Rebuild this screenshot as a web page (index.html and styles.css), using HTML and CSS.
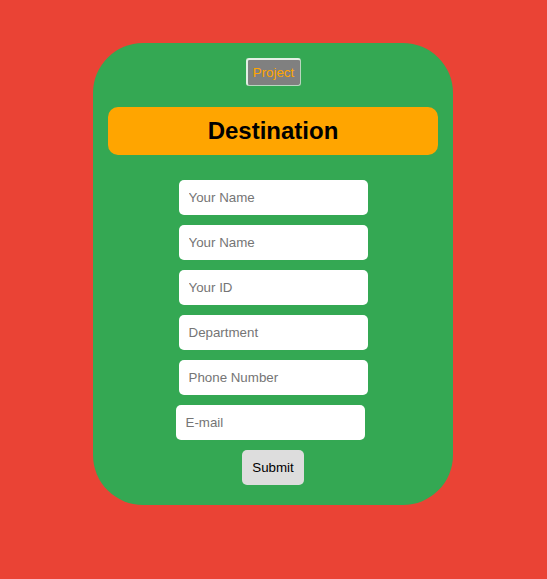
FILE: index.html
```html
<!DOCTYPE html>
<html>
<head>
<meta charset="utf-8">
<link rel="stylesheet" href="styles.css">
</head>
<body>
<div class="card">
  <button class="project">Project</button>
  <h1 class="title">Destination</h1>
  <form class="form">
    <input class="field" type="text" placeholder="Your Name">
    <input class="field" type="text" placeholder="Your Name">
    <input class="field" type="text" placeholder="Your ID">
    <input class="field" type="text" placeholder="Department">
    <input class="field" type="text" placeholder="Phone Number">
    <input class="field field-shift" type="email" placeholder="E-mail">
    <button class="submit" type="button">Submit</button>
  </form>
</div>
</body>
</html>
```
FILE: styles.css
```css
html, body {
  margin: 0;
  padding: 0;
  background: #EA4335;
  font-family: "Liberation Sans", Arial, sans-serif;
}
body {
  padding-right: 1px;
}
.card {
  box-sizing: border-box;
  width: 360px;
  height: 462px;
  margin: 43px auto 0;
  background: #34A853;
  border-radius: 50px;
  padding: 15px 15px 20px;
  display: flex;
  flex-direction: column;
  align-items: center;
}
.project {
  box-sizing: border-box;
  width: 55px;
  height: 28px;
  padding: 0;
  background: #808080;
  color: #FFA500;
  font-family: "Liberation Sans", Arial, sans-serif;
  font-size: 13.33px;
  border: 1px solid #b9d6bf;
  border-left: 2px solid #e2efe4;
  border-top: 2px solid #e2efe4;
  border-radius: 3px;
}
.title {
  box-sizing: border-box;
  width: 330px;
  height: 48px;
  margin: 21px 0 0;
  background: #FFA500;
  border-radius: 10px;
  font-size: 24px;
  font-weight: bold;
  color: #000;
  display: flex;
  align-items: center;
  justify-content: center;
}
.form {
  margin: 25px 0 0;
  display: flex;
  flex-direction: column;
  align-items: center;
  gap: 10px;
}
.field {
  box-sizing: border-box;
  width: 189px;
  height: 35px;
  border: none;
  border-radius: 5px;
  background: #fff;
  padding: 0 10px;
  font-family: "Liberation Sans", Arial, sans-serif;
  font-size: 13.33px;
  outline: none;
}
.field::placeholder {
  color: #757575;
}
.field-shift {
  margin-left: -6px;
}
.submit {
  box-sizing: border-box;
  width: 62px;
  height: 35px;
  border: none;
  border-radius: 5px;
  background: #dddddd;
  color: #000;
  font-family: "Liberation Sans", Arial, sans-serif;
  font-size: 13.33px;
  padding: 0;
}
```
